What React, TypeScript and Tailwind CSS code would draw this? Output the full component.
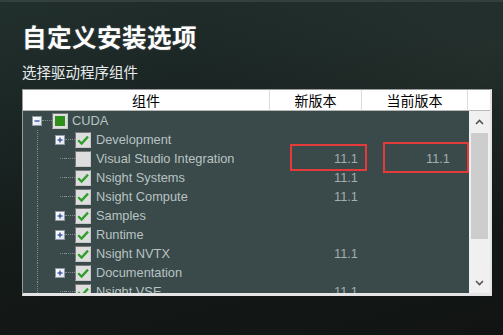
import React from "react";

type Row = {
  level: 0 | 1;
  label: string;
  state: "checked" | "unchecked" | "partial";
  expander?: "plus" | "minus";
  newVer?: string;
  curVer?: string;
};

const rows: Row[] = [
  { level: 0, label: "CUDA", state: "partial", expander: "minus" },
  { level: 1, label: "Development", state: "checked", expander: "plus" },
  { level: 1, label: "Visual Studio Integration", state: "unchecked", newVer: "11.1", curVer: "11.1" },
  { level: 1, label: "Nsight Systems", state: "checked", newVer: "11.1" },
  { level: 1, label: "Nsight Compute", state: "checked", newVer: "11.1" },
  { level: 1, label: "Samples", state: "checked", expander: "plus" },
  { level: 1, label: "Runtime", state: "checked", expander: "plus" },
  { level: 1, label: "Nsight NVTX", state: "checked", newVer: "11.1" },
  { level: 1, label: "Documentation", state: "checked", expander: "plus" },
  { level: 1, label: "Nsight VSE", state: "checked", newVer: "11.1" },
];

function Expander({ kind }: { kind: "plus" | "minus" }) {
  return (
    <div className="w-[10px] h-[10px] shrink-0 border border-[#8e9aa8] bg-gradient-to-br from-white to-[#dfe4ea] flex items-center justify-center">
      <svg width="8" height="8" viewBox="0 0 8 8">
        <path d="M1.5 4 H6.5" stroke="#2c4aa0" strokeWidth="1.3" />
        {kind === "plus" && <path d="M4 1.5 V6.5" stroke="#2c4aa0" strokeWidth="1.3" />}
      </svg>
    </div>
  );
}

function Check({ state }: { state: Row["state"] }) {
  return (
    <div className="w-[16px] h-[16px] shrink-0 border border-t-[#7a7a7a] border-l-[#7a7a7a] border-b-[#c8c8c8] border-r-[#c8c8c8] bg-[#dedede] flex items-center justify-center">
      {state === "checked" && (
        <svg width="14" height="14" viewBox="0 0 14 14">
          <path d="M2.2 7.2 L5.6 10.6 L12 3.6" fill="none" stroke="#2f9e2a" strokeWidth="2.3" />
        </svg>
      )}
      {state === "partial" && <div className="w-[10px] h-[10px] bg-[#2f8f1c]" />}
    </div>
  );
}

function Dots({ w }: { w: string }) {
  return <div className={`${w} h-0 border-t border-dotted border-[#7e8c8c] shrink-0`} />;
}

function TreeRow({ row }: { row: Row }) {
  return (
    <div className="h-[19px] flex items-center">
      <div className="w-[247px] h-full flex items-center shrink-0">
        {row.level === 0 ? (
          <>
            <div className="w-[9px] shrink-0" />
            <Expander kind="minus" />
            <Dots w="w-[10px]" />
            <Check state={row.state} />
            <span className="ml-[4px] text-[#b9c3c3] text-[12.8px] whitespace-nowrap">{row.label}</span>
          </>
        ) : (
          <>
            <div className="w-[14px] shrink-0" />
            <div className="w-[18px] h-full shrink-0 border-l border-dotted border-[#7e8c8c]" />
            {row.expander ? (
              <Expander kind="plus" />
            ) : (
              <div className="w-[10px] shrink-0 flex">
                <div className="w-[5px]" />
                <Dots w="w-[5px]" />
              </div>
            )}
            <Dots w="w-[10px]" />
            <Check state={row.state} />
            <span className="ml-[5px] text-[#b9c3c3] text-[12.8px] whitespace-nowrap">{row.label}</span>
          </>
        )}
      </div>
      <div className="w-[92px] text-right pr-[4px] text-[#a3aeae] text-[12.8px] shrink-0">{row.newVer ?? ""}</div>
      <div className="w-[106px] text-right pr-[18px] text-[#a3aeae] text-[12.8px] shrink-0">{row.curVer ?? ""}</div>
    </div>
  );
}

export default function App() {
  return (
    <div
      className="relative w-[503px] h-[335px] overflow-hidden font-['Liberation_Sans','Noto_Sans_CJK_SC',sans-serif] bg-[linear-gradient(165deg,#22302d_0%,#1a2523_30%,#141a18_55%,#111412_100%)]"
    >
      <div className="absolute inset-0 bg-[radial-gradient(ellipse_at_100%_15%,rgba(60,75,70,0.35),transparent_45%)]" />
      <div className="absolute left-0 right-0 top-0 h-[2px] bg-[#34403d]" />
      <div className="relative pl-[22px] pt-[24px]">
        <div className="text-white text-[24.5px] leading-[26px] font-bold font-['Noto_Sans_CJK_SC',serif] tracking-[0.5px] [text-shadow:0_0_2px_rgba(255,255,255,0.25)]">
          自定义安装选项
        </div>
        <div className="mt-[14px] text-[#e8ecec] text-[14.5px] leading-[16px] font-['Noto_Sans_CJK_SC',sans-serif]">
          选择驱动程序组件
        </div>
        <div className="mt-[9px] w-[470px] h-[207px] border-t border-l border-t-[#9a9a9a] border-l-[#9a9a9a] border-b-[3px] border-r-2 border-b-[#e4e4e4] border-r-[#e4e4e4] flex flex-col bg-white">
          <div className="h-[21px] flex bg-white text-black text-[14px] leading-[20px] font-['Noto_Sans_CJK_SC',sans-serif] border-b border-[#b8b8b8] shrink-0">
            <div className="w-[247px] text-center border-r border-[#dcdcdc]">组件</div>
            <div className="w-[92px] text-center border-r border-[#dcdcdc]">新版本</div>
            <div className="w-[106px] text-center border-r border-[#dcdcdc]">当前版本</div>
            <div className="flex-1" />
          </div>
          <div className="flex-1 flex overflow-hidden">
            <div className="flex-1 bg-[#3a4a4a] overflow-hidden">
              {rows.map((r) => (
                <TreeRow key={r.label} row={r} />
              ))}
            </div>
            <div className="w-[21px] bg-[#f0f0f0] flex flex-col items-center shrink-0">
              <div className="h-[22px] w-full flex items-center justify-center">
                <svg width="9" height="6" viewBox="0 0 9 6">
                  <path d="M1 5 L4.5 1.5 L8 5" fill="none" stroke="#555" strokeWidth="1.6" />
                </svg>
              </div>
              <div className="w-[17px] h-[106px] bg-[#cdcdcd]" />
              <div className="flex-1" />
              <div className="h-[20px] w-full flex items-center justify-center">
                <svg width="9" height="6" viewBox="0 0 9 6">
                  <path d="M1 1 L4.5 4.5 L8 1" fill="none" stroke="#555" strokeWidth="1.6" />
                </svg>
              </div>
            </div>
          </div>
        </div>
      </div>
      <div className="absolute left-[290px] top-[144px] w-[77px] h-[27px] border-2 border-[#e53a3a]" />
      <div className="absolute left-[383px] top-[142px] w-[86px] h-[31px] border-2 border-[#e53a3a]" />
    </div>
  );
}
